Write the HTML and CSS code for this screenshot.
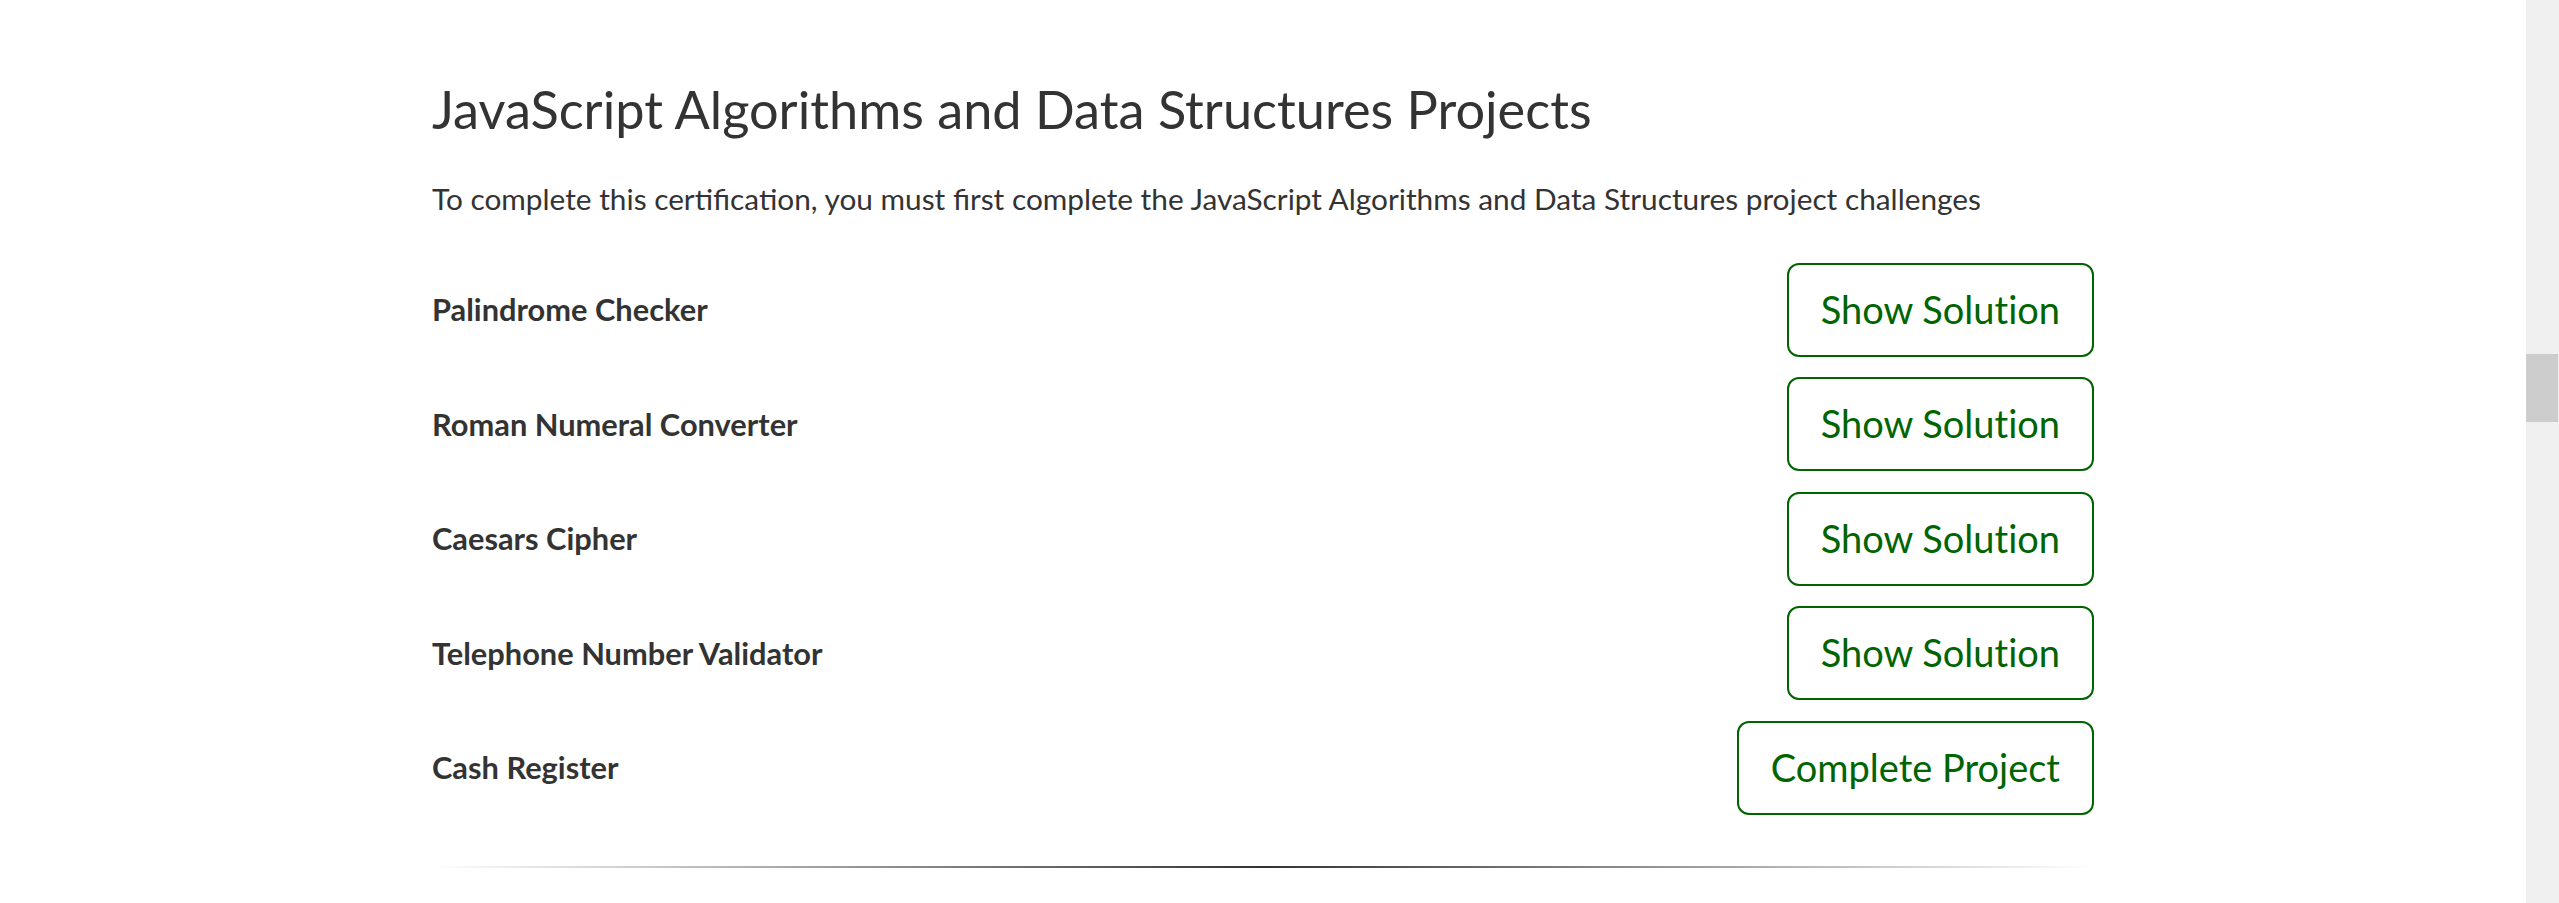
FILE: index.html
```html
<!DOCTYPE html>
<html lang="en">
<head>
 <meta charset="utf-8">
 <title>JavaScript Algorithms and Data Structures Projects</title>
 <link rel="stylesheet" href="styles.css">
</head>
<body>
 <div class="page">
 <main class="content">
 <section class="projects">
 <h2 class="projects-title">JavaScript Algorithms and Data Structures Projects</h2>
 <p class="projects-intro">To complete this certification, you must first complete the JavaScript Algorithms and Data Structures project challenges</p>

 <ul class="project-list">
 <li class="project-row">
 <span class="project-name">Palindrome Checker</span>
 <button class="project-btn">Show Solution</button>
 </li>
 <li class="project-row">
 <span class="project-name">Roman Numeral Converter</span>
 <button class="project-btn">Show Solution</button>
 </li>
 <li class="project-row">
 <span class="project-name">Caesars Cipher</span>
 <button class="project-btn">Show Solution</button>
 </li>
 <li class="project-row">
 <span class="project-name">Telephone Number Validator</span>
 <button class="project-btn">Show Solution</button>
 </li>
 <li class="project-row">
 <span class="project-name">Cash Register</span>
 <button class="project-btn">Complete Project</button>
 </li>
 </ul>

 <hr class="divider">
 </section>
 </main>

 <div class="scrollbar">
 <div class="scrollbar-thumb"></div>
 </div>
 </div>
</body>
</html>
```

FILE: styles.css
```css
html, body {
 margin: 0;
 padding: 0;
 height: 100%;
 overflow: hidden;
 background: #fff;
 color: #333;
 font-family: Lato, "Open Sans", sans-serif;
}

.page {
 display: flex;
 height: 100%;
}

.content {
 flex: 1;
}

.projects {
 width: 1662px;
 margin: 0 auto;
}

.projects-title {
 margin: 78px 0 0;
 font-size: 52.3px;
 font-weight: 400;
 line-height: 1.2;
 color: #333;
}

.projects-intro {
 margin: 37.5px 0 0;
 font-size: 29.8px;
 line-height: 1.4;
}

.project-list {
 list-style: none;
 margin: 32.5px 0 0;
 padding: 0;
}

.project-row {
 display: flex;
 align-items: center;
 justify-content: space-between;
 padding: 10px 0;
 height: 94.5px;
}

.project-name {
 font-size: 30.8px;
 font-weight: 700;
}

.project-btn {
 font-family: inherit;
 font-size: 38px;
 font-variant-ligatures: no-common-ligatures;
 line-height: 1.2;
 color: #006400;
 background: #fff;
 border: 2px solid #006400;
 border-radius: 12px;
 padding: 22px 32px;
 cursor: pointer;
}

.divider {
 margin: 41px 0 0;
 height: 2px;
 border: none;
 background: linear-gradient(to right, rgba(51, 51, 51, 0), #333 50%, rgba(51, 51, 51, 0));
}

.scrollbar {
 width: 33px;
 background: #f0f0f0;
 padding-top: 354px;
}

.scrollbar-thumb {
 width: 32px;
 height: 68px;
 background: #cdcdcd;
}
```
